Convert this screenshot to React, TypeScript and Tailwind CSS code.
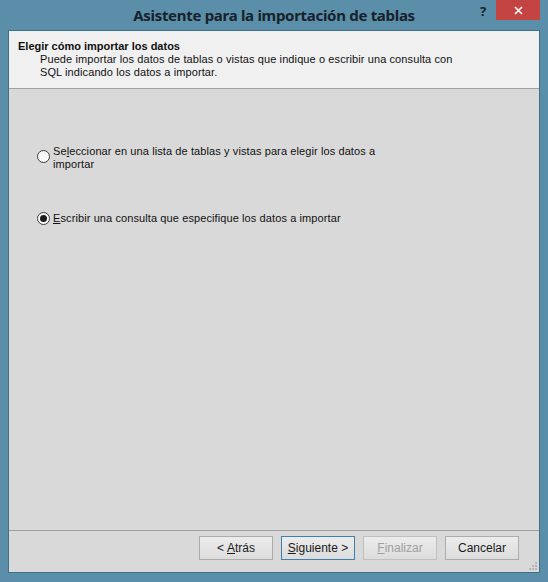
import React from "react";

const sans = { fontFamily: '"Liberation Sans", Arial, sans-serif' };

function Btn({ children, primary, disabled }: { children: React.ReactNode; primary?: boolean; disabled?: boolean }) {
  return (
    <div
      className={
        "w-[74px] h-[24px] flex items-center justify-center text-[12px] border bg-gradient-to-b from-[#ececec] to-[#dcdcdc] " +
        (primary ? "border-[#3c7fb1] " : disabled ? "border-[#bfbfbf] " : "border-[#acacac] ") +
        (disabled ? "text-[#a0a0a0]" : "text-[#1a1a1a]")
      }
    >
      {children}
    </div>
  );
}

function Radio({ checked }: { checked?: boolean }) {
  return (
    <div className="w-[13px] h-[13px] rounded-full border border-[#3c3c3c] bg-gradient-to-b from-[#f4f4f4] to-[#ffffff] flex items-center justify-center shrink-0">
      {checked && <div className="w-[7px] h-[7px] rounded-full bg-[#1a1a1a]" />}
    </div>
  );
}

export default function App() {
  return (
    <div className="w-[548px] h-[582px] bg-[#5b8ea8] flex flex-col" style={sans}>
      <div className="h-[30px] relative flex items-start justify-center shrink-0">
        <div className="mt-[5px] text-[15px] leading-[20px] font-bold text-[#17222c]" style={{ fontFamily: '"Noto Sans", "Open Sans", sans-serif', letterSpacing: "-0.3px" }}>
          Asistente para la importación de tablas
        </div>
        <div className="absolute left-[480px] top-[2px] text-[13px] font-bold text-[#17222c]" style={{ fontFamily: '"Noto Sans", sans-serif' }}>?</div>
        <div className="absolute left-[496px] top-0 w-[44px] h-[20px] bg-[#c44441] flex items-center justify-center">
          <svg width="9" height="9" viewBox="0 0 9 9">
            <path d="M1 1 L8 8 M8 1 L1 8" stroke="#ffffff" strokeWidth="1.6" />
          </svg>
        </div>
      </div>
      <div className="mx-[8px] flex-1 mb-[9px] border border-[#416f87] flex flex-col bg-[#d9d9d9]">
        <div className="h-[58px] bg-[#f0f0f0] border-b border-[#a0a0a0] pl-[9px] pt-[8px] shrink-0" style={{ letterSpacing: "0.1px" }}>
          <div className="text-[11px] font-bold text-[#111] leading-[14px]" style={{ letterSpacing: "0px" }}>Elegir cómo importar los datos</div>
          <div className="pl-[22px] text-[11px] text-[#111] leading-[13px]">
            <div>Puede importar los datos de tablas o vistas que indique o escribir una consulta con</div>
            <div>SQL indicando los datos a importar.</div>
          </div>
        </div>
        <div className="flex-1 pl-[28px] pt-[56px] text-[11px] text-[#111] leading-[13px]" style={{ letterSpacing: "0.1px" }}>
          <div className="flex items-start gap-[3px]">
            <div className="mt-[5px]"><Radio /></div>
            <div>
              <div>
                Se<span className="underline">l</span>eccionar en una lista de tablas y vistas para elegir los datos a
              </div>
              <div>importar</div>
            </div>
          </div>
          <div className="flex items-center gap-[3px] mt-[41px]">
            <Radio checked />
            <div>
              <span className="underline">E</span>scribir una consulta que especifique los datos a importar
            </div>
          </div>
        </div>
        <div className="h-[42px] border-t border-[#a0a0a0] shrink-0 relative flex justify-end items-start pt-[5px] pr-[20px] gap-[8px]">
          <Btn>
            &lt; <span className="underline ml-[3px]">A</span>trás
          </Btn>
          <Btn primary>
            <span className="underline">S</span>iguiente &gt;
          </Btn>
          <Btn disabled>
            <span className="underline">F</span>inalizar
          </Btn>
          <Btn>Cancelar</Btn>
          <svg className="absolute right-[2px] bottom-[2px]" width="8" height="8" viewBox="0 0 8 8">
            <rect x="6" y="0" width="2" height="2" fill="#b5b5b5" />
            <rect x="3" y="3" width="2" height="2" fill="#b5b5b5" />
            <rect x="6" y="3" width="2" height="2" fill="#b5b5b5" />
            <rect x="0" y="6" width="2" height="2" fill="#b5b5b5" />
            <rect x="3" y="6" width="2" height="2" fill="#b5b5b5" />
            <rect x="6" y="6" width="2" height="2" fill="#b5b5b5" />
          </svg>
        </div>
      </div>
    </div>
  );
}
